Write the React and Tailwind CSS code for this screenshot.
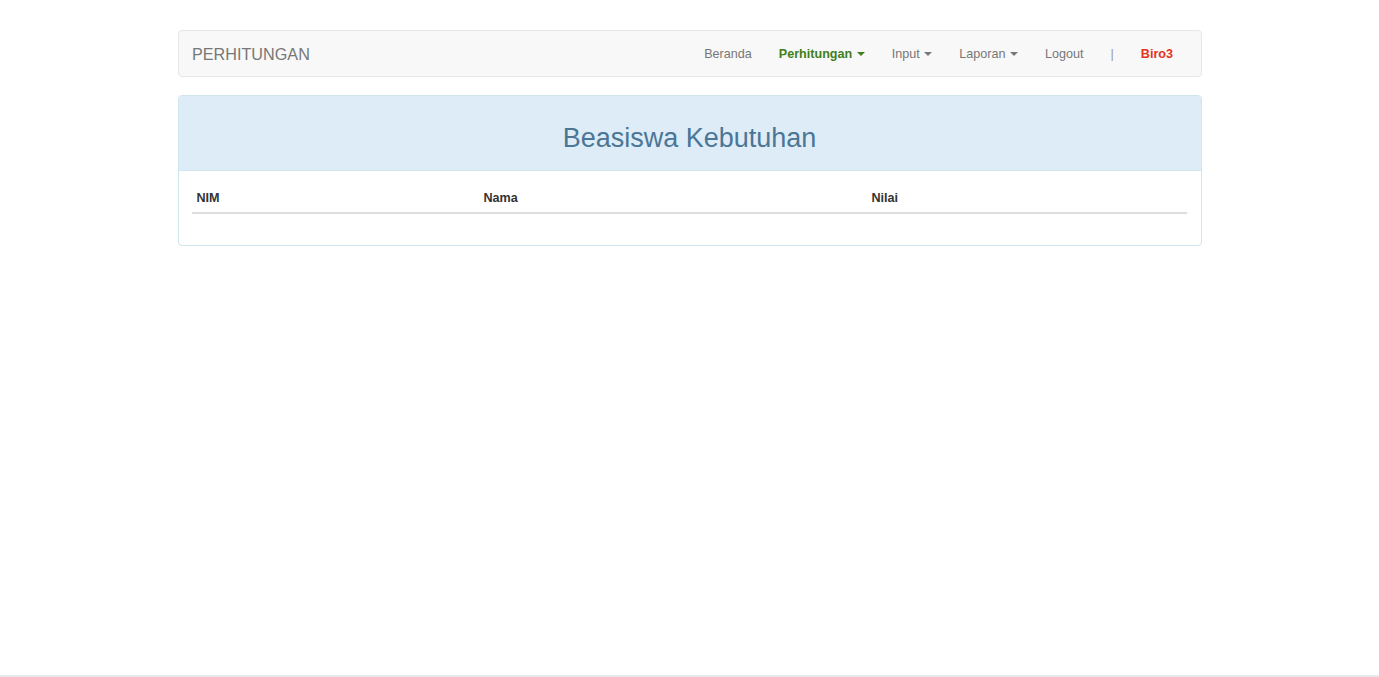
import React from "react";

function Caret() {
  return (
    <span className="ml-[4.5px] inline-block h-0 w-0 border-x-[4px] border-t-[4px] border-x-transparent border-t-current align-middle" />
  );
}

const navItems = [
  { label: "Beranda" },
  { label: "Perhitungan", caret: true, active: true },
  { label: "Input", caret: true },
  { label: "Laporan", caret: true },
  { label: "Logout" },
];

export default function App() {
  return (
    <div
      className="flex min-h-screen flex-col bg-white text-[#333]"
      style={{ fontFamily: '"Liberation Sans", Arial, sans-serif' }}
    >
      <div className="mx-auto w-[1024px] pt-[30px]">
        {/* top navbar */}
        <nav className="flex h-[47px] items-center justify-between rounded-[4px] border border-[#e7e7e7] bg-[#f8f8f8] px-[13.5px]">
          <a className="text-[16.2px] leading-[20px] text-[#777]">PERHITUNGAN</a>
          <ul className="flex items-center text-[12.6px] leading-[18px] text-[#777]">
            {navItems.map((it) => (
              <li
                key={it.label}
                className={
                  "px-[13.5px] " +
                  (it.active ? "font-bold text-[#3f7f1b]" : "")
                }
              >
                {it.label}
                {it.caret && <Caret />}
              </li>
            ))}
            <li className="px-[13.5px] text-[#999]">|</li>
            <li className="pl-[13.5px] pr-[14px] font-bold text-[#e5321d]">Biro3</li>
          </ul>
        </nav>

        {/* panel */}
        <div className="mt-[18px] rounded-[4px] border border-[#cfe6ef] bg-white">
          <div className="rounded-t-[3px] border-b border-[#cfe6ef] bg-[#ddecf6] px-[13.5px] pb-[17px] pt-[9px]">
            <h2 className="mt-[18px] text-center text-[27px] leading-[30px] text-[#4b7697]">
              Beasiswa Kebutuhan
            </h2>
          </div>
          <div className="p-[13.5px]">
            <table className="mb-[18px] w-full border-collapse text-left text-[12.6px] leading-[18px]">
              <thead>
                <tr className="border-b-2 border-[#ddd]">
                  <th className="w-[287px] px-[4.5px] py-[4.5px] font-bold">NIM</th>
                  <th className="w-[388px] px-[4.5px] py-[4.5px] font-bold">Nama</th>
                  <th className="px-[4.5px] py-[4.5px] font-bold">Nilai</th>
                </tr>
              </thead>
              <tbody />
            </table>
          </div>
        </div>
      </div>
      <div className="mt-auto h-[2px] bg-[#e8e8e8]" />
    </div>
  );
}
